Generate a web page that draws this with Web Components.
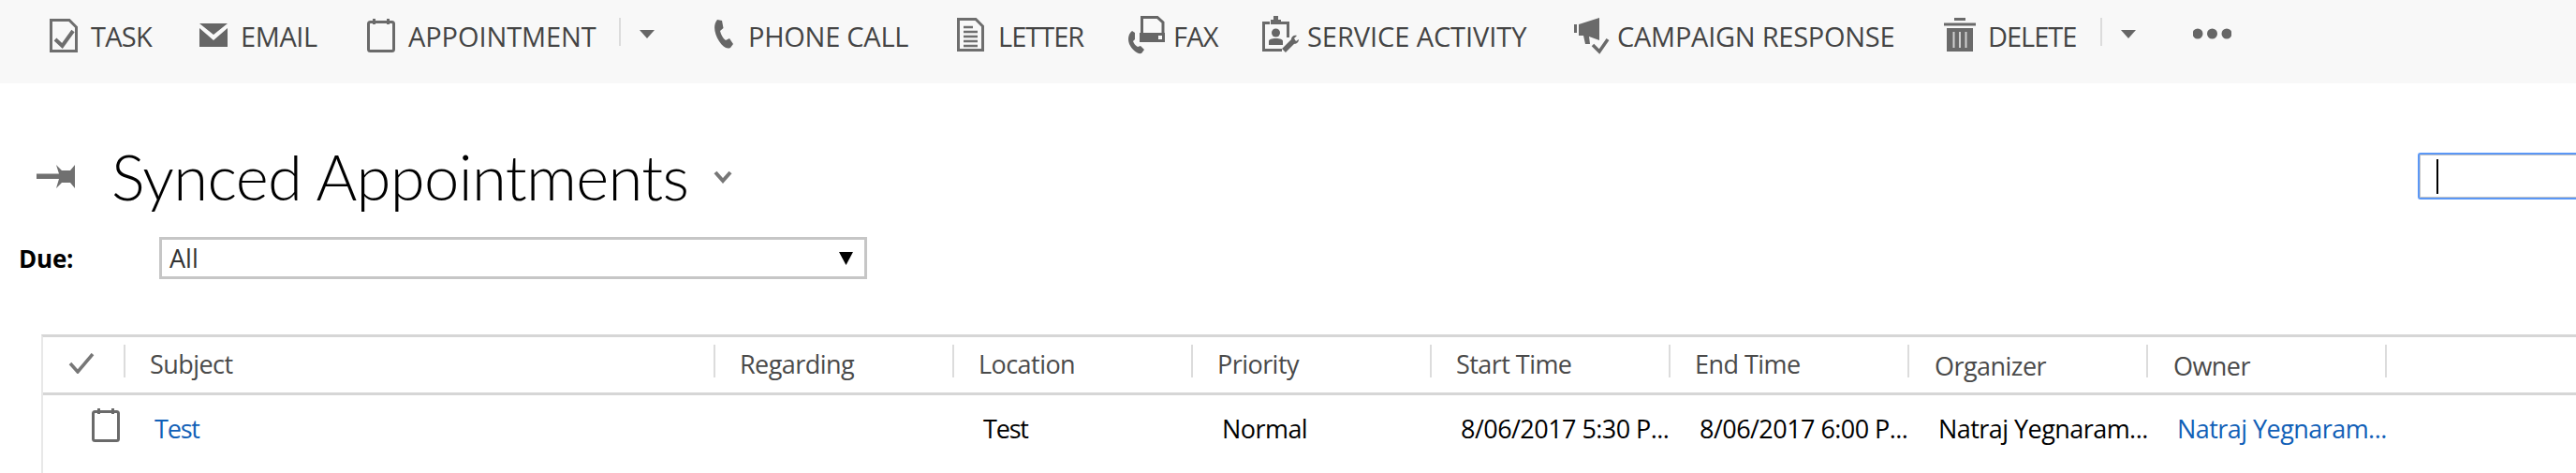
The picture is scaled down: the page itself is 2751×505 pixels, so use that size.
<!doctype html>
<html lang="en">
<head>
<meta charset="utf-8">
<title>Synced Appointments</title>
<style>
  html, body { margin: 0; height: 505px; overflow: hidden; background: #fff; }
  body { font-family: "Open Sans", "Liberation Sans", sans-serif; }
</style>
</head>
<body>
<crm-toolbar>
  <crm-tool icon="task" label="TASK" style="--gap:14px;--w:65px;--ls:-.75px"></crm-tool>
  <crm-tool icon="email" label="EMAIL" style="--ml:51px;--gap:14px;--w:82px;--ls:-.41px"></crm-tool>
  <crm-tool icon="appointment" label="APPOINTMENT" style="--ml:53px;--gap:14px;--w:200px;--ls:-.09px"></crm-tool>
  <crm-split style="--ml:25px"></crm-split>
  <crm-tool icon="phone" label="PHONE CALL" style="--ml:62px;--gap:16px;--w:172px;--ls:-.26px"></crm-tool>
  <crm-tool icon="letter" label="LETTER" style="--ml:51px;--gap:15px;--w:92px;--ls:-1px"></crm-tool>
  <crm-tool icon="fax" label="FAX" style="--ml:46px;--gap:8px;--w:48px;--ls:-.73px"></crm-tool>
  <crm-tool icon="service" label="SERVICE ACTIVITY" style="--ml:46px;--gap:9px;--w:235px;--ls:-.07px"></crm-tool>
  <crm-tool icon="campaign" label="CAMPAIGN RESPONSE" style="--ml:50px;--gap:8px;--w:298px;--ls:-.26px"></crm-tool>
  <crm-tool icon="trash" label="DELETE" style="--ml:51px;--gap:13px;--w:95px;--ls:-1.05px"></crm-tool>
  <crm-split style="--ml:25px"></crm-split>
  <crm-tool icon="dots" style="--ml:61px;--gap:0;--w:0"></crm-tool>
</crm-toolbar>

<crm-title>Synced Appointments</crm-title>
<crm-filter label="Due:" value="All"></crm-filter>

<crm-grid>
  <crm-row head>
    <crm-cell kind="check"></crm-cell>
    <crm-cell head>Subject</crm-cell>
    <crm-cell head>Regarding</crm-cell>
    <crm-cell head>Location</crm-cell>
    <crm-cell head>Priority</crm-cell>
    <crm-cell head>Start Time</crm-cell>
    <crm-cell head>End Time</crm-cell>
    <crm-cell head low>Organizer</crm-cell>
    <crm-cell head low>Owner</crm-cell>
    <crm-cell head></crm-cell>
  </crm-row>
  <crm-row>
    <crm-cell kind="type"></crm-cell>
    <crm-cell link style="letter-spacing:-1.2px">Test</crm-cell>
    <crm-cell></crm-cell>
    <crm-cell style="letter-spacing:-1.2px">Test</crm-cell>
    <crm-cell>Normal</crm-cell>
    <crm-cell>8/06/2017 5:30 P...</crm-cell>
    <crm-cell>8/06/2017 6:00 P...</crm-cell>
    <crm-cell>Natraj Yegnaram...</crm-cell>
    <crm-cell link>Natraj Yegnaram...</crm-cell>
    <crm-cell></crm-cell>
  </crm-row>
</crm-grid>

<script>
const html = String.raw;

// every icon is 44px tall so the toolbar can centre them on the text
const ICONS = {
  task: [30, html`<path d="M1.5 5.5H21L28.5 13V38.5H1.5Z" fill="none" stroke="#6e6e6e" stroke-width="3"/>
    <path d="M6 26L13.5 33L25 17" fill="none" stroke="#6e6e6e" stroke-width="4"/>`],
  email: [30, html`<path d="M0 9H30L15 21Z M0 14L15 27L30 14V34H0Z" fill="#666"/>`],
  appointment: [30, html`<rect x="1.5" y="7.5" width="27" height="31" rx="2" fill="none" stroke="#6a6a6a" stroke-width="3"/>
    <path d="M7.5 4V10M22.5 4V10" stroke="#6a6a6a" stroke-width="3"/>`],
  phone: [22, html`<path d="M5 5L10 6L11.5 14L8 17C9 21 11 25 14 27L18 25L22 31L19 35C15 37 11 34 7 28C2 20 0 11 5 5Z" fill="#666"/>`],
  letter: [29, html`<path d="M1.5 4.5H20L27.5 12V37.5H1.5Z" fill="none" stroke="#6e6e6e" stroke-width="3"/>
    <path d="M7 13H17M7 18H22M7 23H22M7 28H22M7 33H22" stroke="#6e6e6e" stroke-width="2.5"/>`],
  fax: [41, html`<path d="M15.5 19V2.5H32L38 8V19" fill="none" stroke="#666" stroke-width="3"/>
    <path d="M13 19H40V29H13Z M33 22V26H37V22Z" fill="#666" fill-rule="evenodd"/>
    <path d="M5 17L8 19V26L6 28C7 31 9 33 11 34L14 33L18 37L15 41C10 42 5 37 2 31C0 26 1 20 5 17Z" fill="#666"/>`],
  service: [40, html`<path d="M9 8.5H2.5V37.5H22M21 8.5H28.5V24" fill="none" stroke="#6a6a6a" stroke-width="3"/>
    <path d="M10 10V5H13V1H18V5H21V10Z" fill="#6a6a6a"/>
    <circle cx="15.5" cy="19" r="4.5" fill="#666"/>
    <path d="M8 32V28C8 26 11 25 15.5 25S23 26 23 28V32Z" fill="#666"/>
    <path d="M24 38L35 27" stroke="#666" stroke-width="5.5"/>
    <path d="M32 26C32 23 35 21 38 22L35 25L37 28L40 26C40 30 36 32 33 30Z" fill="#666"/>`],
  campaign: [38, html`<path d="M0 10H3V19H0Z M5 10L27 3V27L16 23L17 31H12L10 22H5Z" fill="#6a6a6a"/>
    <path d="M20 32L27 39L36 26" fill="none" stroke="#6a6a6a" stroke-width="3.5"/>`],
  trash: [34, html`<path d="M11 3H23V6H11Z M0 8.5H34V11.5H0Z" fill="#6a6a6a"/>
    <path d="M3 14H31V39H3Z" fill="#6a6a6a"/>
    <path d="M10.5 18V35M17 18V35M23.5 18V35" stroke="#cfcfcf" stroke-width="2"/>`],
  dots: [41, html`<circle cx="5" cy="20" r="5.5" fill="#666"/><circle cx="20.5" cy="20" r="5.5" fill="#666"/><circle cx="36" cy="20" r="5.5" fill="#666"/>`],
  arrow: [16, html`<path d="M0 16H16L8 25Z" fill="#666"/>`],
};

function icon(name, height = 44) {
  const [w, body] = ICONS[name];
  return html`<svg width="${w}" height="${height}" viewBox="0 0 ${w} ${height}">${body}</svg>`;
}

class CrmToolbar extends HTMLElement {
  constructor() {
    super();
    this.attachShadow({ mode: "open" }).innerHTML = html`
      <style>
        :host { display: flex; box-sizing: border-box; height: 89px; padding: 16px 0 0 53px; background: #f8f8f8; }
      </style>
      <slot></slot>`;
  }
}

class CrmTool extends HTMLElement {
  constructor() {
    super();
    const label = this.getAttribute("label") || "";
    this.attachShadow({ mode: "open" }).innerHTML = html`
      <style>
        :host { display: flex; flex: none; align-items: center; height: 44px; margin-left: var(--ml, 0); gap: var(--gap); }
        svg { display: block; flex: none; filter: blur(.4px); }
        span { width: var(--w); font-size: 29px; letter-spacing: var(--ls, 0); color: #444; white-space: nowrap; }
      </style>
      ${icon(this.getAttribute("icon"))}<span>${label}</span>`;
  }
}

class CrmSplit extends HTMLElement {
  constructor() {
    super();
    this.attachShadow({ mode: "open" }).innerHTML = html`
      <style>
        :host { display: flex; flex: none; height: 44px; margin-left: var(--ml, 0); }
        i { width: 2px; height: 30px; margin: 3px 20px 0 0; background: #dcdcdc; }
        svg { display: block; }
      </style>
      <i></i>${icon("arrow")}`;
  }
}

class CrmTitle extends HTMLElement {
  constructor() {
    super();
    this.attachShadow({ mode: "open" }).innerHTML = html`
      <style>
        :host { display: flex; align-items: center; height: 80px; margin-top: 59px; padding-left: 39px; overflow: hidden; }
        h1 { flex: none; width: 614px; margin: 0 29px 0 39px; font: 300 67px/80px Lato, "Open Sans", sans-serif; letter-spacing: -.68px; color: #000; white-space: nowrap; }
        svg { display: block; flex: none; }
        .pin { filter: blur(.4px); }
        .box { display: flex; flex: none; align-items: center; box-sizing: border-box; width: 200px; height: 50px; margin-left: auto; margin-right: -31px;
          padding-left: 18px; border: 2px solid #5b97f6; border-right: 0; border-radius: 3px 0 0 3px; box-shadow: inset 0 0 0 1px #c4c4c4; background: #fff; }
        .caret { width: 2px; height: 37px; background: #000; }
      </style>
      <svg class="pin" width="41" height="25" viewBox="0 0 41 25"><path d="M21 0L27 6H36L41 0V25L36 19H27L21 25L24 15H0V9.5H24Z" fill="#707070"/></svg>
      <h1><slot></slot></h1>
      <svg width="20" height="15" viewBox="0 0 20 15"><path d="M2 3L10 12L18 3" fill="none" stroke="#777" stroke-width="4"/></svg>
      <div class="box"><div class="caret"></div></div>`;
  }
}

class CrmFilter extends HTMLElement {
  constructor() {
    super();
    this.attachShadow({ mode: "open" }).innerHTML = html`
      <style>
        :host { display: flex; align-items: center; height: 45px; margin-top: 25px; padding-left: 20px; }
        b { flex: none; width: 150px; font-size: 26px; font-weight: 700; letter-spacing: -.2px; color: #000; }
        .select { display: flex; align-items: center; justify-content: space-between; box-sizing: border-box; width: 756px; height: 45px;
          padding: 0 12px 0 8px; border: 3px solid #c6c6c6; font-size: 27px; color: #333; }
        svg { display: block; }
      </style>
      <b>${this.getAttribute("label")}</b>
      <div class="select"><span>${this.getAttribute("value")}</span>
        <svg width="15" height="14" viewBox="0 0 15 14"><path d="M0 0H15L7.5 14Z" fill="#000"/></svg></div>`;
  }
}

class CrmGrid extends HTMLElement {
  constructor() {
    super();
    this.attachShadow({ mode: "open" }).innerHTML = html`
      <style>
        :host { display: block; height: 148px; margin: 59px 0 0 44px; border-top: 3px solid #d6d6d6; border-left: 2px solid #e8e8e8; }
      </style>
      <slot></slot>`;
  }
}

class CrmRow extends HTMLElement {
  constructor() {
    super();
    this.attachShadow({ mode: "open" }).innerHTML = html`
      <style>
        :host { display: grid; grid-template-columns: 86px 630px repeat(7, 255px) 1fr; }
        :host([head]) { height: 59px; border-bottom: 3px solid #d6d6d6; }
      </style>
      <slot></slot>`;
  }
}

class CrmCell extends HTMLElement {
  constructor() {
    super();
    const kind = this.getAttribute("kind");
    let art = "<slot></slot>";
    if (kind === "check") {
      art = html`<svg width="28" height="22" viewBox="0 0 28 22"><path d="M2 11L10 20L26 1" fill="none" stroke="#777" stroke-width="3.5"/></svg>`;
    } else if (kind === "type") {
      art = html`<svg width="30" height="44" viewBox="0 0 30 44">${ICONS.appointment[1]}</svg>`;
    }
    this.attachShadow({ mode: "open" }).innerHTML = html`
      <style>
        :host { display: block; box-sizing: border-box; min-width: 0; height: 72px; padding: 18px 0 0 33px; font-size: 27px; letter-spacing: -.55px; line-height: 36px; color: #000; white-space: nowrap; }
        :host([link]) { color: #1160b7; }
        :host([head]) { height: 35px; margin-top: 8px; padding: 0 0 0 26px; border-left: 2px solid #dcdcdc; color: #4a4a4a; line-height: 41px; }
        :host([head][low]) { line-height: 45px; padding-left: 27px; }
        :host([kind="check"]) { height: 35px; margin-top: 8px; padding: 9px 0 0 27px; }
        :host([kind="type"]) { padding: 10px 4px 0 52px; }
        svg { display: block; }
        :host([kind="type"]) svg { filter: blur(.4px); }
      </style>
      ${art}`;
  }
}

customElements.define("crm-toolbar", CrmToolbar);
customElements.define("crm-tool", CrmTool);
customElements.define("crm-split", CrmSplit);
customElements.define("crm-title", CrmTitle);
customElements.define("crm-filter", CrmFilter);
customElements.define("crm-grid", CrmGrid);
customElements.define("crm-row", CrmRow);
customElements.define("crm-cell", CrmCell);
</script>
</body>
</html>
